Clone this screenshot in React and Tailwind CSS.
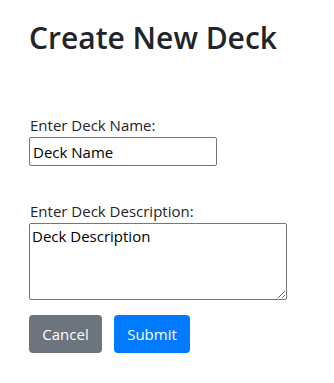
import React, { useState } from 'react';

const App = () => {
  const [name, setName] = useState('Deck Name');
  const [description, setDescription] = useState('Deck Description');

  return (
    <div className="bg-white min-h-screen px-[29px] pt-[19px] text-[#212529]" style={{ fontFamily: '"Open Sans", "Noto Sans", sans-serif' }}>
      <h1 className="text-[30px] leading-[37px] font-semibold">Create New Deck</h1>

      <form className="mt-[57px] flex flex-col" onSubmit={(e) => e.preventDefault()}>
        <label className="block text-[15px] leading-6 px-px">Enter Deck Name:</label>
        <input
          type="text"
          value={name}
          onChange={(e) => setName(e.target.value)}
          className="w-[188px] h-[29px] border border-[#767676] rounded-[2px] px-[3px] text-[15px] text-black outline-none"
        />

        <label className="block text-[15px] leading-6 px-px mt-[33px]">Enter Deck Description:</label>
        <textarea
          value={description}
          onChange={(e) => setDescription(e.target.value)}
          className="w-[258px] h-[77px] border border-[#767676] rounded-[2px] px-[2px] py-px text-[15px] text-black outline-none"
        />

        <div className="flex gap-3 mt-[15px]">
          <button type="button" className="w-[73px] h-[38px] rounded bg-[#6c757d] text-white text-[15px]">
            Cancel
          </button>
          <button type="submit" className="w-[76px] h-[38px] rounded bg-[#007bff] text-white text-[15px]">
            Submit
          </button>
        </div>
      </form>
    </div>
  );
};

export default App;
